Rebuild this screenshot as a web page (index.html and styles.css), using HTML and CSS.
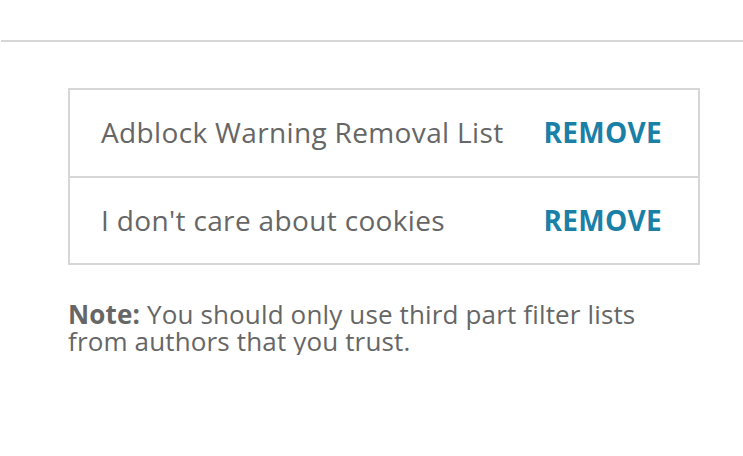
FILE: index.html
```html
<!DOCTYPE html>
<html>
<head>
<meta charset="utf-8">
<link rel="stylesheet" href="styles.css">
</head>
<body>
<div class="rule"></div>
<div class="content">
  <div class="lists">
    <div class="row row-first">
      <span class="name">Adblock Warning Removal List</span>
      <span class="remove">REMOVE</span>
    </div>
    <div class="row row-second">
      <span class="name">I don't care about cookies</span>
      <span class="remove">REMOVE</span>
    </div>
  </div>
  <p class="note">
    <span class="note-line"><strong class="note-label">Note:</strong> You should only use third part filter lists</span>
    <span class="note-line">from authors that you trust.</span>
  </p>
</div>
</body>
</html>
```
FILE: styles.css
```css
html, body {
  margin: 0;
  padding: 0;
  background: #ffffff;
}
body {
  font-family: "Open Sans", "Liberation Sans", sans-serif;
  color: #666666;
}
.rule {
  margin-top: 40px;
  margin-left: 1px;
  border-top: 2px solid #d6d6d6;
}
.content {
  padding: 46px 43px 0 68px;
}
.lists {
  border: 2px solid #d6d6d6;
}
.row {
  display: flex;
  align-items: center;
  justify-content: space-between;
  padding: 0 36px 0 31px;
}
.row-first {
  height: 86px;
  border-bottom: 2px solid #d6d6d6;
}
.row-second {
  height: 85px;
}
.name {
  font-size: 28px;
  letter-spacing: 0.35px;
  transform: translateY(-1px);
}
.remove {
  font-size: 28px;
  font-weight: 700;
  color: #1a80a8;
  letter-spacing: 0.3px;
  transform: translateY(-1px);
}
.note {
  margin: 36px 0 0 0;
  font-size: 26px;
  line-height: 27px;
  letter-spacing: 0.15px;
  display: flex;
  flex-direction: column;
  align-items: flex-start;
}
.note-line {
  display: block;
  height: 27px;
  white-space: nowrap;
}
.note-label {
  font-weight: 700;
}
```
